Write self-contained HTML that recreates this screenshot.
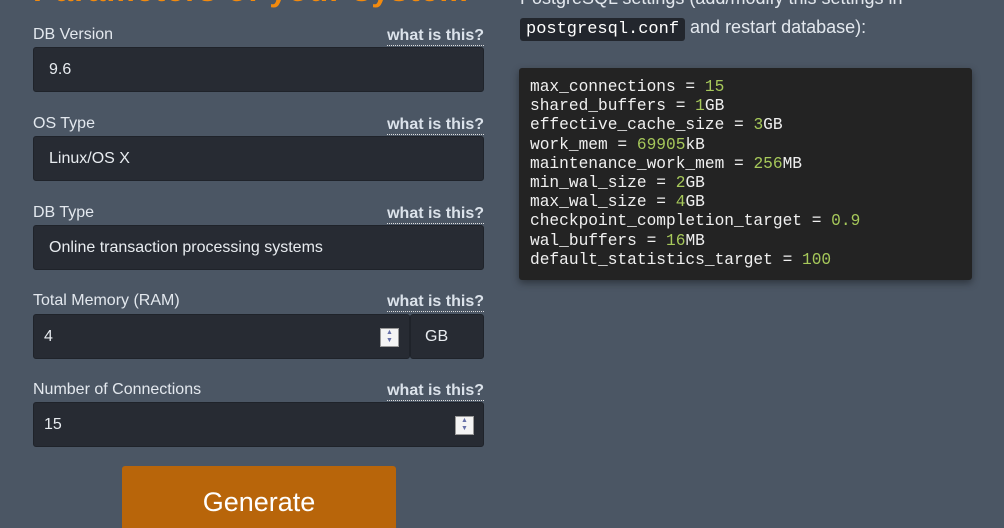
<!DOCTYPE html><html><head><style>
html,body{margin:0;width:1004px;height:528px;overflow:hidden}
body{background:#4b5664;font-family:"Liberation Sans",sans-serif;position:relative}
.t{position:absolute;left:33px;top:-28px;color:#f28a0e;font-size:32px;font-weight:bold;letter-spacing:1px}
.lab{position:absolute;left:33px;width:451px;color:#e3e8ee;font-size:16px}
.lab b{position:absolute;right:0;top:0;font-size:16px;color:#dbe2ea;border-bottom:1px dotted #ddd;line-height:19px}
.in{position:absolute;left:33px;width:449px;height:43px;background:#272b33;border:1px solid #1f232a;border-radius:3px;color:#e8ecf0;font-size:16px;line-height:43px;box-sizing:content-box}
.in span{padding-left:15px}
.sp{position:absolute;width:17px;height:17px;background:#f4f4f4;border:1px solid #999;top:13px;font-size:7px;color:#6670a8;text-align:center;line-height:8px}
.code{position:absolute;left:519px;top:68px;width:453px;height:212px;background:#232323;border-radius:3px;box-shadow:0 3px 8px rgba(0,0,0,.4);font-family:"Liberation Mono",monospace;font-size:16.2px;line-height:19.2px;color:#f0f0f0;padding:10px 11px;box-sizing:border-box;white-space:pre}
.g{color:#a6c85a}
.r{position:absolute;left:520px;color:#e3e8ee;font-size:18px}
</style></head><body>
<div class="t">Parameters of your system</div>
<div class="r" style="top:-12px">PostgreSQL settings (add/modify this settings in</div>
<div class="r" style="top:17px"><span style="font-family:'Liberation Mono',monospace;background:#22262d;color:#fff;padding:2px 6px;border-radius:3px;font-size:17px">postgresql.conf</span> and restart database):</div>
<div class="lab" style="top:26px">DB Version<b>what is this?</b></div>
<div class="in" style="top:47px"><span>9.6</span></div>
<div class="lab" style="top:115px">OS Type<b>what is this?</b></div>
<div class="in" style="top:136px"><span>Linux/OS X</span></div>
<div class="lab" style="top:204px">DB Type<b>what is this?</b></div>
<div class="in" style="top:225px"><span>Online transaction processing systems</span></div>
<div class="lab" style="top:292px">Total Memory (RAM)<b>what is this?</b></div>
<div class="in" style="top:314px;width:375px"><span style="padding-left:10px">4</span><div class="sp" style="left:346px">▲<br>▼</div></div>
<div class="in" style="top:314px;left:410px;width:72px;text-align:left"><span style="padding-left:14px">GB</span></div>
<div class="lab" style="top:381px">Number of Connections<b>what is this?</b></div>
<div class="in" style="top:402px"><span style="padding-left:10px">15</span><div class="sp" style="left:421px">▲<br>▼</div></div>
<div style="position:absolute;left:122px;top:466px;width:274px;height:70px;background:#b8650a;border-radius:3px;color:#fff;font-size:27px;text-align:center;line-height:72px">Generate</div>
<div class="code">max_connections = <span class="g">15</span>
shared_buffers = <span class="g">1</span>GB
effective_cache_size = <span class="g">3</span>GB
work_mem = <span class="g">69905</span>kB
maintenance_work_mem = <span class="g">256</span>MB
min_wal_size = <span class="g">2</span>GB
max_wal_size = <span class="g">4</span>GB
checkpoint_completion_target = <span class="g">0.9</span>
wal_buffers = <span class="g">16</span>MB
default_statistics_target = <span class="g">100</span></div>
</body></html>
